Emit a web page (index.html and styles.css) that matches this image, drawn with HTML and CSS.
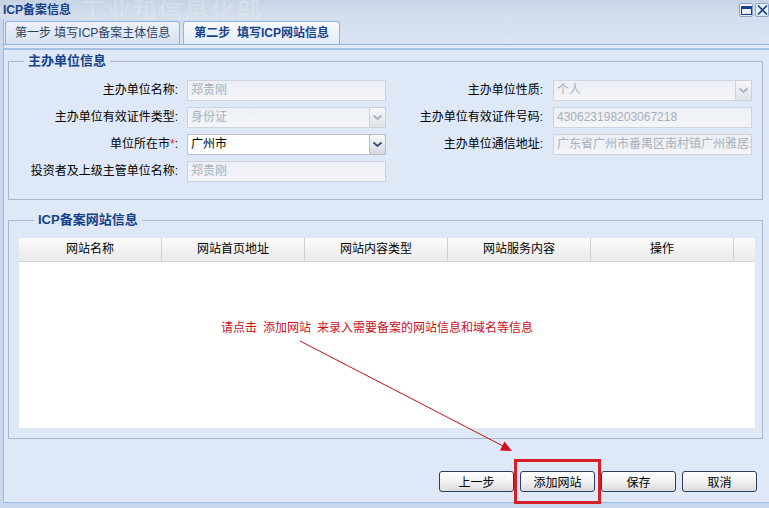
FILE: index.html
```html
<!DOCTYPE html>
<html lang="zh-CN">
<head>
    <meta charset="UTF-8">
    <title>ICP备案信息</title>
    <link rel="stylesheet" href="styles.css">
</head>
<body>
    <div class="win">
        <div class="titlebar">
            <span class="title">ICP备案信息</span>
            <span class="watermark">工业和信息化部</span>
            <div class="tools">
                <span class="tool"><svg width="11" height="9" viewBox="0 0 11 9"><rect x="0.5" y="0.5" width="10" height="8" fill="none" stroke="#15428b"/><rect x="0" y="0" width="11" height="3" fill="#15428b"/></svg></span>
                <span class="tool"><svg width="11" height="10" viewBox="0 0 11 10"><path d="M1 0.5 L10 9.5 M10 0.5 L1 9.5" stroke="#15428b" stroke-width="1.6"/></svg></span>
            </div>
        </div>
        <div class="frame">
            <div class="inner">
                <div class="tabstrip">
                    <div class="tab">第一步 填写ICP备案主体信息</div>
                    <div class="tab active">第二步&nbsp; 填写ICP网站信息</div>
                </div>
                <div class="tabline"></div>

                <!-- 주관 단위 정보 -->
                <fieldset class="group unit">
                    <legend>主办单位信息</legend>
                    <div class="form_grid">
                        <label>主办单位名称:</label>
                        <div class="field disabled"><span>郑贵刚</span></div>
                        <label>主办单位性质:</label>
                        <div class="field disabled combo"><span>个人</span><i class="trigger"><svg width="11" height="7" viewBox="0 0 11 7"><path d="M1.5 1.5 L5.5 5 L9.5 1.5" fill="none" stroke="#a9b3c4" stroke-width="2"/></svg></i></div>

                        <label>主办单位有效证件类型:</label>
                        <div class="field disabled combo"><span>身份证</span><i class="trigger"><svg width="11" height="7" viewBox="0 0 11 7"><path d="M1.5 1.5 L5.5 5 L9.5 1.5" fill="none" stroke="#a9b3c4" stroke-width="2"/></svg></i></div>
                        <label>主办单位有效证件号码:</label>
                        <div class="field disabled"><span>430623198203067218</span></div>

                        <label>单位所在市<em>*</em>:</label>
                        <div class="field combo"><span>广州市</span><i class="trigger"><svg width="11" height="7" viewBox="0 0 11 7"><path d="M1.5 1.5 L5.5 5 L9.5 1.5" fill="none" stroke="#3b5478" stroke-width="2"/></svg></i></div>
                        <label>主办单位通信地址:</label>
                        <div class="field disabled"><span>广东省广州市番禺区南村镇广州雅居乐花园</span></div>

                        <label>投资者及上级主管单位名称:</label>
                        <div class="field disabled"><span>郑贵刚</span></div>
                    </div>
                </fieldset>

                <!-- 사이트 정보 -->
                <fieldset class="group site">
                    <legend>ICP备案网站信息</legend>
                    <div class="grid">
                        <div class="grid_head">
                            <div>网站名称</div>
                            <div>网站首页地址</div>
                            <div>网站内容类型</div>
                            <div>网站服务内容</div>
                            <div>操作</div>
                            <div class="filler"></div>
                        </div>
                        <div class="grid_body">
                            <p class="hint">请点击&ensp;添加网站&ensp;来录入需要备案的网站信息和域名等信息</p>
                        </div>
                    </div>
                </fieldset>

                <div class="footer">
                    <button>上一步</button>
                    <button>添加网站</button>
                    <button>保存</button>
                    <button>取消</button>
                </div>
            </div>
        </div>

        <!-- 안내 화살표 / 강조 박스 -->
        <svg class="arrow" width="769" height="508" viewBox="0 0 769 508">
            <line x1="300" y1="341" x2="503" y2="446" stroke="#c0101a" stroke-width="1"/>
            <polygon points="512,451 500,450.5 504.5,441.5" fill="#d0101a"/>
        </svg>
        <div class="mark"></div>
    </div>
</body>
</html>
```

FILE: styles.css
```css
body { margin: 0; font: 12px "Liberation Sans", "Noto Sans CJK SC", sans-serif; }
.win { position: relative; width: 769px; height: 508px; overflow: hidden; background: #c9d8ee; }

.titlebar { position: relative; height: 19px; display: flex; align-items: center; padding-left: 3px; background: linear-gradient(#c7d3e5, #d6dfec); overflow: hidden; }
.title { position: relative; z-index: 1; font-weight: bold; color: #15428b; line-height: 14px; }
.watermark { position: absolute; left: 80px; top: -9px; font-size: 25px; letter-spacing: 1px; color: rgba(255,255,255,0.22); white-space: nowrap; }
.tools { margin-left: auto; display: flex; gap: 2px; padding-top: 1px; }
.tool { width: 14px; height: 14px; box-sizing: border-box; display: flex; align-items: center; justify-content: center; background: linear-gradient(#f7f9fc, #dfe7f2); border: 1px solid #8aa4c6; border-radius: 2px; }

.frame { height: 489px; box-sizing: border-box; padding: 0 0 3px 3px; }
.inner { height: 100%; box-sizing: border-box; background: #dfe8f6; border-left: 1px solid #99bbe8; border-bottom: 1px solid #99bbe8; }

.tabstrip { display: flex; gap: 3px; height: 25px; box-sizing: content-box; padding: 2px 0 0 1px; margin-top: -2px; background: linear-gradient(#d2ddee, #dbe5f4); border-bottom: 1px solid #8db2e3; }
.tab { align-self: flex-end; height: 22px; line-height: 22px; padding: 0 9px; border: 1px solid #8db2e3; border-bottom: none; border-radius: 3px 3px 0 0; background: linear-gradient(#eef3fa, #d4e0f2); color: #2d3f5e; white-space: nowrap; }
.tab.active { padding: 0 10px; background: linear-gradient(#f8fafd, #e4ecf8); color: #15428b; font-weight: bold; }
.tabline { height: 3px; background: #e3ebf7; border-bottom: 2px solid #a5c1e6; }

.group { margin: 4px 6px 0 4px; border: 1px solid #a8b7cc; }
.group legend { margin-left: 15px; padding: 0 4px; font-weight: bold; font-size: 13px; line-height: 14px; color: #15428b; }
.unit { padding: 12px 9px 17px 0; }
.site { margin-top: 13px; padding: 11px 7px 10px 10px; }

.form_grid { display: grid; grid-template-columns: 178px 199px 167px 199px; grid-auto-rows: 21px; row-gap: 6px; }
.form_grid label { text-align: right; padding-right: 9px; line-height: 21px; color: #000; white-space: nowrap; }
.form_grid label:nth-of-type(even) { padding-right: 10px; }
.form_grid em { font-style: normal; color: #e0202a; }
.field { display: flex; box-sizing: border-box; height: 21px; border: 1px solid #b9c1cf; background: #fff; }
.field span { flex: 1; padding: 0 3px; line-height: 19px; white-space: nowrap; overflow: hidden; color: #000; }
.field.disabled { border-color: #cfd4de; background: linear-gradient(#eceff5, #f3f5f9); }
.field.disabled span { color: #a8b0bd; }
.field.combo { border-right: none; }
.trigger { width: 17px; height: 21px; margin-top: -1px; box-sizing: border-box; display: flex; align-items: center; justify-content: center; border: 1px solid #b5bcc8; border-radius: 2px; background: linear-gradient(#fafafb, #d3d7de); }
.disabled .trigger { border-color: #cdd2da; background: linear-gradient(#f6f7f9, #dfe2e8); }

.grid { display: flex; flex-direction: column; }
.grid_head { display: flex; height: 24px; background: linear-gradient(#fbfbfb, #eaeaea); border-bottom: 1px solid #d4d4d4; box-sizing: border-box; }
.grid_head div { width: 143px; box-sizing: border-box; border-right: 1px solid #d0d0d0; text-align: center; line-height: 23px; color: #000; }
.grid_head .filler { width: 20px; border-right: none; }
.grid_body { height: 166px; background: #fff; }
.hint { margin: 0; padding: 59px 0 0 202px; line-height: 14px; color: #c8101c; }

.footer { display: flex; justify-content: flex-end; gap: 6px; padding: 32px 12px 0 0; }
.footer button { width: 75px; height: 21px; padding: 0; font: inherit; color: #000; border: 1px solid #2b3e5c; border-radius: 3px; background: linear-gradient(#ffffff, #f1f1f1 50%, #dcdcdc); }

.arrow { position: absolute; left: 0; top: 0; pointer-events: none; }
.mark { position: absolute; left: 514px; top: 459px; width: 87px; height: 45px; box-sizing: border-box; border: 3px solid #d31f25; }
```
